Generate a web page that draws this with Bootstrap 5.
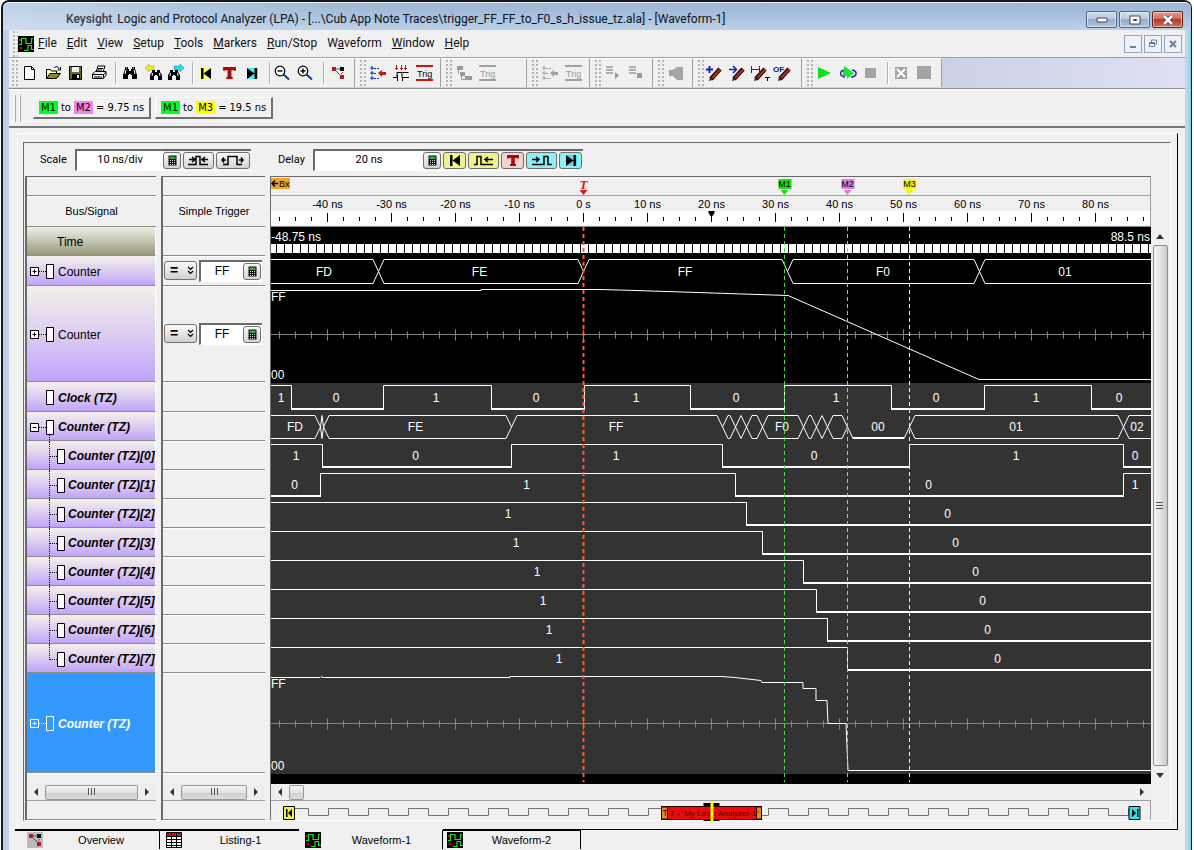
<!DOCTYPE html>
<html lang="en">
<head>
<meta charset="utf-8">
<meta name="viewport" content="width=device-width, initial-scale=1">
<title>Keysight Logic and Protocol Analyzer</title>
<link href="https://cdn.jsdelivr.net/npm/bootstrap@5.3.0/dist/css/bootstrap.min.css" rel="stylesheet">
<style>
:root{--face:#f0f0f0;--line:#a0a0a0;--dark:#6e6e6e;--ui:Roboto,"Open Sans",sans-serif;--tah:"DejaVu Sans Condensed","DejaVu Sans",sans-serif;--ari:"Liberation Sans",Arial,sans-serif}
body{background:#fff;font:12px/16px var(--ari);color:#000}
button,input,select{font:inherit;color:inherit}
svg{display:block;flex:none}
.win{margin:0 2px 0 1px;border:solid #14161c;border-width:2px 1px 0 2px;border-radius:8px 8px 0 0;background:linear-gradient(90deg,#bdd1e8 0 6px,#c3d6ea calc(100% - 6px),#b9d5ee calc(100% - 3px),#63d8ec);padding:0 6px}
.title-bar{height:28px;margin:0 -6px;padding:0 8px 0 63px;border-top:1px solid #eaf2fa;border-radius:6px 6px 0 0;background:linear-gradient(90deg,rgba(220,232,245,.55),transparent 30%),linear-gradient(#9cb6d4,#a9c1dd 50%,#bcd2ea)}
.title-text{font:12px/24px var(--ui);color:#0c1422;padding-top:4px}
.title-text b{font-weight:500;color:#3b3f4a;margin-right:5px}
.win-btn{width:31px;height:17px;border:1px solid #51647d;border-radius:2px;background:linear-gradient(#cddcec,#b7cbe0 48%,#94aeca 50%,#adc6df);box-shadow:inset 0 0 0 1px rgba(255,255,255,.5)}
.win-btn.close-btn{background:linear-gradient(#e39a8e,#d0695a 48%,#b53a26 50%,#d2705a);border-color:#5e2119}
.menu-bar{height:28px;background:var(--face);border-bottom:1px solid var(--line);padding:0 3px 0 4px}
.menu-bar a{color:#111;text-decoration:none;font:12px/27px var(--ui)}
.menu-links{gap:10px}.tight{gap:2px}
.mdi-btn{width:18px;height:18px;border:1px solid #8fa5c0;background:#eef3fa}
.grip{width:5px;height:26px;flex:none;background:radial-gradient(circle at 1px 1px,#b4b4b4 1px,transparent 1px) 0 0/4px 4px}
.tools{height:31px;background:linear-gradient(90deg,#ccd1e6 80%,#dfe1f2);border-bottom:1px solid #8c8c8c}
.tool-group{height:29px;background:var(--face);border-right:1px solid var(--line);border-top:1px solid #fff;padding:0 5px 0 5px}
.tool-group .grip{width:6px}
.tool-group.first{padding-left:3px}
.tool-group.roomy{padding-right:28px}
.tool-btn{width:23px;height:28px;border:0;background:none}
.tool-sep{width:8px;height:22px;background:linear-gradient(90deg,transparent 5px,#b0b0b0 5px 6px,#fff 6px 7px,transparent 7px)}
.readings{height:39px;background:var(--face);border-bottom:2px solid #777;border-top:1px solid #fff;padding:0 5px;box-shadow:inset 0 -4px 0 var(--face),inset 0 -5px 0 #fff}
.bar-grip{width:7px;height:27px;border:solid #a8a8a8;border-width:0 1px 0 0;background:linear-gradient(90deg,#fff 1px,#a8a8a8 1px 2px,var(--face) 2px 5px,#fff 5px)}
.reading{height:22px;font:11px/14px var(--tah);border:solid;border-color:#fff #707070 #707070 #fff;border-width:1px 2px 2px 1px;background:var(--face);padding:0 5px}
.chip{padding:0 2px;display:inline-block;line-height:13px}
.m1{background:#0f2}.m2{background:#ee82ee}.m3{background:#ff0}
.desk{background:var(--face);padding:5px 7px 0 8px}
.bevel{border:solid;border-color:#fff #000 #000 #fff;border-width:1px;padding:8px 6px 8px 5px}
.sunk{border:solid;border-color:#6a6a6a #fff #fff #6a6a6a;border-width:1px;padding:0 0 0 1px}
.scale-row{height:33px}
.scale-row label{font:11px/16px var(--ui)}
.lab-scale{width:50px;padding-left:15px}
.lab-delay{width:62px;padding-left:27px}
.field{height:22px;border:solid;border-color:#6a6a6a #fff #fff #6a6a6a;border-width:2px 0 1px 2px;background:#fff}
.field input{border:0;outline:0;background:none;text-align:center;padding:0;height:18px;font:11px/16px var(--ui)}
.field .rest{background:var(--face);height:19px;padding:0 1px 0 0}
.in-scale{width:86px}.in-delay{width:108px}.in-trig{width:42px}
.field .in-trig{font:12px/16px var(--ari)}
.cap-btn{height:17px;border:1px solid #707070;border-radius:3px;background:linear-gradient(#f8f8f8,#d4d4d4);padding:0;display:flex;align-items:center;justify-content:center}
.w18{width:18px}.w22{width:23px}.w30{width:31px}.w33{width:34px}
.yel{background:#f2f28a}.cya{background:#8ff0f4}.pnk{background:#f4d4d0}
.pane{border:solid #6a6a6a;border-width:1px 0 0 2px}
.pane-bus{width:131px;margin-right:5px}
.pane-trig{width:104px;margin-right:5px;background:var(--face)}
.pane-wave{border-width:1px 0 0 1px;min-width:0}
.cellrow{border-bottom:1px solid #8c8c8c;box-shadow:0 1px 0 #fff;height:29px}
.h19{height:19px}.h31{height:31px}.h30{height:30px}.h96{height:96px}.h100{height:100px}
.trig-cell{gap:2px;padding-left:1px}
.head{font-size:11px}
.time-cell,.bus-cell,.picked{border-right:1px solid #fff;padding-top:2px;white-space:nowrap}
.time-cell{background:linear-gradient(#efefe6,#97987a);padding-left:30px}
.bus-cell,.picked{padding-left:3px}
.bus-cell{background:linear-gradient(#f4f0ec,#dccdf0 50%,#bfa3fb)}
.bit-cell{padding-left:18px}
.bit-cell span{padding-left:3px}
.picked{background:#3399ff;color:#fff;--box:#3399ff}
.tz{font-weight:700;font-style:italic}
.gap-row{height:11px}
.hs{height:17px;background:#eee;border-bottom:1px solid var(--line)}
.hs button{width:18px;height:16px;border:0;background:none;padding:0;display:flex;align-items:center;justify-content:center}
.hs .thumb{height:15px;border:1px solid #979797;border-radius:2px;background:linear-gradient(#f4f4f4,#e2e2e2 50%,#cfcfcf 50%,#dcdcdc)}
.hs .short{width:15px}
.foot{height:19px;border-bottom:1px solid #8c8c8c}
.pane-wave .foot{border:0;border-right:1px solid var(--line)}
.trig-select{width:33px;height:19px;border:1px solid #707070;border-radius:3px;appearance:none;font:bold 14px/14px var(--ari);padding:0 0 2px 5px;background:url("data:image/svg+xml,%3Csvg xmlns='http://www.w3.org/2000/svg' width='7' height='9'%3E%3Cpath d='M1 1l2.5 2.5L6 1M1 5l2.5 2.5L6 5' fill='none' stroke='%23000' stroke-width='1.2'/%3E%3C/svg%3E") no-repeat 22px 4px,linear-gradient(#fafafa,#d0d0d0)}
.ruler{height:50px;border-bottom:1px solid #8c8c8c;border-right:1px solid var(--line)}
.ruler svg text{font-size:11px}
.vs{width:19px;padding:51px 2px 0 1px}
.vs button{height:18px;border:0;background:none;padding:0}
.vs .thumb{width:15px;height:521px;border:1px solid #8f8f8f;border-radius:2px;background:linear-gradient(90deg,#f2f2f2,#e6e6e6 45%,#c8c8c8)}
.bar-red{--bar:#c81414}.bar-grey{--bar:#a0a0a0;color:#9a9a9a}
.sheet-tabs{height:20px;margin:0 -7px 0 -8px;padding-left:6px}
.sheet-tabs a{height:20px;border-top:2px solid #000;border-right:1px solid #000;color:#000;text-decoration:none;font-size:11px;width:139px;padding-left:6px;margin-top:-1px}
.sheet-tabs a.lead-tab{width:145px;padding-left:12px}
.sheet-tabs a.on{border-color:var(--face) #000 var(--face) var(--face);width:144px}
.sheet-tabs a.end-tab{width:138px;padding-left:4px}
.sheet-tabs span{text-align:center;flex:1}
.plot text,.ruler text,.ov text{font-family:var(--ari)}
</style>
</head>
<body>
<svg width="0" height="0" class="position-absolute" aria-hidden="true">
<defs>
<symbol id="app" viewBox="0 0 16 16"><path d="M0 0h16v16H0z" fill="#000"/><path d="M1 8.500h2.500v-6H8v5h5.500v-5H15M6 14.500h4v-5h3.500v4H16" fill="none" stroke="#1ee02a" stroke-width="1.200"/><path d="M1 3h2v2H1zM2 11h2v2H2z" fill="#b01818"/></symbol>
<symbol id="calc" viewBox="0 0 9 11"><path d="M.5.5h8v10h-8z" fill="#111"/><path d="M1.500 1.500h6v2.500h-6z" fill="#2fae3c"/><path d="M2 5.500h6M2 7.500h6M2 9.500h6" stroke="#ddd" stroke-dasharray="1 1"/></symbol>
<symbol id="first" viewBox="0 0 14 13"><path d="M1 1h11v11H1z" fill="#ff6" opacity=".8"/><path d="M2 1h2.500v11H2zM12 1v11L4.500 6.500z"/></symbol>
<symbol id="last" viewBox="0 0 14 13"><path d="M2 1h11v11H2z" fill="#35e3ee" opacity=".8"/><path d="M9.500 1H12v11H9.500zM2 1v11l7.500-5.500z"/></symbol>
<symbol id="trg" viewBox="0 0 14 13"><path d="M1 1h12v3.500h-1.500L10.500 4H8.800v6H10v2H4v-2h1.200V4H3.500l-1 .5H1z" fill="#a80c0c"/></symbol>
<symbol id="bino" viewBox="0 0 16 16"><path d="M3 2h3v2h1v2h2V4h1V2h3v2l2 6v4h-5v-4H9V9H7v1H6v4H1v-4l2-6z"/><path d="M4 5l-1 4M12 5l1 4M4 3h1M11 3h1" stroke="#fff"/></symbol>
<symbol id="bino-s" viewBox="0 0 12 10"><path d="M2 0h3v2h2V0h3v2l2 3v5H8V6H7V5H5v1H4v4H0V5l2-3z"/><path d="M2.500 3L2 6M9.500 3l.5 3" stroke="#fff"/></symbol>
<symbol id="lens" viewBox="0 0 16 16"><circle cx="6" cy="6" r="4.800" fill="#fff" stroke="#000" stroke-width="1.200"/><path d="M9.500 9.500l5.500 5" stroke="#123a8c" stroke-width="2"/><path d="M3.500 6h5" stroke="#000" stroke-width="1.400"/></symbol>
<symbol id="flow" viewBox="0 0 16 16"><path d="M2 2h4v4H2zM10 10h4v4h-4z" fill="#b01828"/><path d="M10 2h4v4h-4z" fill="#111"/><path d="M6 4h4M5 5l5 5" stroke="#555"/><path d="M11 9l2-2" stroke="#a44"/></symbol>
<symbol id="list" viewBox="0 0 16 16"><path d="M1 2h2v2H1zM1 7h2v2H1zM1 12h2v2H1z" fill="none" stroke="currentColor"/><path d="M4 3.500h3M4 8.500h3M4 13.500h5M7 3.500h3" stroke="currentColor" stroke-dasharray="2 1"/></symbol>
<symbol id="trig" viewBox="0 0 17 16"><path d="M0 1h17M0 15h17" stroke="var(--bar)" stroke-width="2"/><text x="1" y="12" font-size="9" font-family="Liberation Sans" fill="currentColor">Trig</text></symbol>
<symbol id="pen" viewBox="0 0 18 17"><path d="M6 14L15 4" stroke="#200" stroke-width="4.500"/><path d="M7 13L15 4.500" stroke="#a03020" stroke-width="2.500"/><path d="M4 16l1-3 2 2z" fill="#111"/></symbol>
<symbol id="plus" viewBox="0 0 24 17"><path d="M.5 4.500h8v8h-8z" fill="var(--box,#fff)" stroke="currentColor"/><path d="M2.500 8.500h4M4.500 6.500v4" stroke="currentColor"/><path d="M9 8.500h7" stroke="currentColor" stroke-dasharray="1 1"/><path d="M16.500 1.500h7v14h-7z" fill="var(--box,#fff)" stroke="currentColor"/></symbol>
<symbol id="kid" viewBox="0 0 20 29"><path d="M4.500 0v29M5 14.500h7" stroke="#000" stroke-dasharray="1 1"/><path d="M12.500 7.500h7v14h-7z" fill="#fff" stroke="#000"/></symbol>
<symbol id="la" viewBox="0 0 6 8"><path d="M5 0v8L1 4z" fill="#333"/></symbol>
<symbol id="ra" viewBox="0 0 6 8"><path d="M1 0v8l4-4z" fill="#333"/></symbol>
<symbol id="ribs" viewBox="0 0 9 8"><path d="M1.500 0v7M4.500 0v7M7.500 0v7" stroke="#555"/></symbol>
</defs>
</svg>

<div class="win">
<header class="title-bar d-flex align-items-start">
  <div class="title-text flex-grow-1 text-nowrap"><b>Keysight</b>Logic and Protocol Analyzer (LPA) - [...\Cub App Note Traces\trigger_FF_FF_to_F0_s_h_issue_tz.ala] - [Waveform-1]</div>
  <div class="d-flex pt-2 tight">
    <button class="win-btn p-0 d-flex align-items-center justify-content-center" aria-label="Minimize"><svg width="12" height="7"><path d="M1 2h10v4H1z" fill="#fff" stroke="#445"/></svg></button>
    <button class="win-btn p-0 d-flex align-items-center justify-content-center" aria-label="Maximize"><svg width="12" height="10"><path d="M1 1h10v8H1z" fill="#fff" stroke="#445"/><path d="M4.500 4.500h3v1h-3z" fill="#9ab" stroke="#445"/></svg></button>
    <button class="win-btn close-btn p-0 d-flex align-items-center justify-content-center" aria-label="Close"><svg width="12" height="10"><path d="M2 1l8 8M10 1L2 9" stroke="#445" stroke-width="4"/><path d="M2 1l8 8M10 1L2 9" stroke="#fff" stroke-width="2.500"/></svg></button>
  </div>
</header>

<nav class="menu-bar d-flex align-items-center">
  <span class="grip"></span>
  <svg width="16" height="16" class="me-1"><use href="#app"/></svg>
  <div class="d-flex flex-grow-1 menu-links">
    <a href="#"><u>F</u>ile</a><a href="#"><u>E</u>dit</a><a href="#"><u>V</u>iew</a><a href="#"><u>S</u>etup</a><a href="#"><u>T</u>ools</a><a href="#"><u>M</u>arkers</a><a href="#"><u>R</u>un/Stop</a><a href="#">W<u>a</u>veform</a><a href="#"><u>W</u>indow</a><a href="#"><u>H</u>elp</a>
  </div>
  <div class="d-flex tight">
    <button class="mdi-btn p-0 d-flex align-items-center justify-content-center" aria-label="Minimize document"><svg width="8" height="8"><path d="M1 6h6v2H1z" fill="#6b7f98"/></svg></button>
    <button class="mdi-btn p-0 d-flex align-items-center justify-content-center" aria-label="Restore document"><svg width="10" height="9"><path d="M3.500 3V1h5v4H7M1.500 3.500h5v4h-5zM1 4.500h6" fill="none" stroke="#6b7f98"/></svg></button>
    <button class="mdi-btn p-0 d-flex align-items-center justify-content-center" aria-label="Close document"><svg width="8" height="8"><path d="M1 1l6 6M7 1L1 7" stroke="#6b7f98" stroke-width="2"/></svg></button>
  </div>
</nav>

<div class="tools d-flex">
  <div class="tool-group first d-flex align-items-center">
    <span class="grip"></span>
    <button class="tool-btn p-0 ps-1" aria-label="New"><svg width="16" height="16"><path d="M2.500 1.500h7l3 3v10h-10zM9.500 1.500v3h3" fill="#fff" stroke="#000"/></svg></button>
    <button class="tool-btn p-0 ps-1" aria-label="Open"><svg width="17" height="16"><path d="M1.500 13.500v-9h4l1 1.500h5V8" fill="#ffffb0" stroke="#000"/><path d="M1.500 13.500L5 8.500h10.500l-4 5z" fill="#8c8c20" stroke="#000"/><path d="M9 3c2-2 4-2 5 1M15.500 2v3h-3" fill="none" stroke="#000"/></svg></button>
    <button class="tool-btn p-0 ps-1" aria-label="Save"><svg width="16" height="16"><path d="M1.500 1.500h12v13h-12z" fill="#6b6b20" stroke="#000"/><path d="M4 2h7v5H4z" fill="#eee"/><path d="M4 9h8v5H4z"/><path d="M9 10h2v3H9z" fill="#eee"/></svg></button>
    <button class="tool-btn p-0 ps-1" aria-label="Print"><svg width="17" height="16"><path d="M5 7l2-6h7l-2 6" fill="#fff" stroke="#000"/><path d="M1.500 9L4 6.500h11v4l-3 3H1.500z" fill="#eee" stroke="#000"/><path d="M1.500 9.500h11v4M12.500 9.500L15 7M7 3.500h5M6 5h5M3 12h8" stroke="#000" fill="none"/><path d="M9 10.500h2v1H9z" fill="#dd0"/></svg></button>
    <span class="tool-sep"></span>
    <button class="tool-btn p-0 ps-1" aria-label="Find"><svg width="16" height="16"><use href="#bino"/></svg></button>
    <button class="tool-btn p-0 ps-1" aria-label="Find previous"><svg width="18" height="18"><path d="M0 4l4-4v2h5v4H4v2z" fill="#ee2" stroke="#a93" stroke-width=".5"/><use href="#bino-s" x="5" y="6" width="12" height="10"/></svg></button>
    <button class="tool-btn p-0 ps-1" aria-label="Find next"><svg width="18" height="18"><path d="M16 4l-4-4v2H6v4h6v2z" fill="#2de" stroke="#289" stroke-width=".5"/><use href="#bino-s" x="0" y="6" width="12" height="10"/></svg></button>
    <span class="tool-sep"></span>
    <button class="tool-btn p-0 ps-1" aria-label="Go to beginning"><svg width="14" height="13"><use href="#first"/></svg></button>
    <button class="tool-btn p-0 ps-1" aria-label="Go to trigger"><svg width="15" height="14"><use href="#trg"/></svg></button>
    <button class="tool-btn p-0 ps-1" aria-label="Go to end"><svg width="14" height="13"><use href="#last"/></svg></button>
    <span class="tool-sep"></span>
    <button class="tool-btn p-0" aria-label="Zoom out"><svg width="18" height="18"><use href="#lens" x="2" y="1" width="16" height="16"/></svg></button>
    <button class="tool-btn p-0" aria-label="Zoom in"><svg width="18" height="18"><use href="#lens" x="2" y="1" width="16" height="16"/><path d="M8 4.500v5" stroke="#000" stroke-width="1.400"/></svg></button>
    <span class="tool-sep"></span>
    <button class="tool-btn p-0" aria-label="Overview"><svg width="16" height="16" class="ms-1"><use href="#flow"/></svg></button>
  </div>
  <div class="tool-group d-flex align-items-center">
    <span class="grip"></span>
    <button class="tool-btn p-0 ps-1" aria-label="Bus setup"><svg width="17" height="16" color="#1a2ac0"><use href="#list" width="16"/><path d="M8 8l4-3v2h4v3h-4v2z" fill="#c01818"/></svg></button>
    <button class="tool-btn p-0 ps-1" aria-label="Sampling"><svg width="17" height="16"><path d="M3.500 0v5M8.500 0v5M12.500 0v5M2 3.500h3M7 3.500h3M11 3.500h3" stroke="#a01818"/><path d="M0 12.500h4V7.500h5v5h7M9.500 7.500h6M4.500 10v6M9.500 12v4" fill="none" stroke="#000"/></svg></button>
    <button class="tool-btn p-0 ps-1" aria-label="Trigger setup"><svg width="17" height="16" class="bar-red"><use href="#trig"/></svg></button>
  </div>
  <div class="tool-group roomy d-flex align-items-center">
    <span class="grip"></span>
    <button class="tool-btn p-0 ps-1" aria-label="Modules" disabled><svg width="17" height="16" fill="#9a9a9a"><path d="M1 1h6v4H1zM4 7h5v4H4zM9 11h7v4H9zM2 5h1v4H2zM5 11h1v3h3v1H5z"/></svg></button>
    <button class="tool-btn p-0 ps-1" aria-label="Module trigger" disabled><svg width="17" height="16" class="bar-grey"><use href="#trig"/></svg></button>
  </div>
  <div class="tool-group d-flex align-items-center">
    <span class="grip"></span>
    <button class="tool-btn p-0 ps-1" aria-label="Probe setup" disabled><svg width="17" height="16" color="#a0a0a0"><use href="#list" width="16"/><path d="M8 8l4-3v2h4v3h-4v2z" fill="#a0a0a0"/></svg></button>
    <button class="tool-btn p-0 ps-1" aria-label="Probe trigger" disabled><svg width="17" height="16" class="bar-grey"><use href="#trig"/></svg></button>
  </div>
  <div class="tool-group d-flex align-items-center">
    <span class="grip"></span>
    <button class="tool-btn p-0 ps-1" aria-label="Run script" disabled><svg width="16" height="16"><path d="M1 2h7M1 5h7M1 8h7" stroke="#9a9a9a" stroke-width="1.500"/><path d="M10 7v7l4-3.500z" fill="#9a9a9a"/></svg></button>
    <button class="tool-btn p-0 ps-1" aria-label="Stop script" disabled><svg width="16" height="16"><path d="M1 2h7M1 5h7M1 8h7" stroke="#9a9a9a" stroke-width="1.500"/><path d="M9 8h5v5H9z" fill="#9a9a9a"/></svg></button>
  </div>
  <div class="tool-group d-flex align-items-center">
    <span class="grip"></span>
    <button class="tool-btn p-0 ps-1" aria-label="Sound" disabled><svg width="16" height="16"><path d="M1 5h4l4-3h6v13H9l-4-4H1z" fill="#a4a4a4"/></svg></button>
  </div>
  <div class="tool-group d-flex align-items-center">
    <span class="grip"></span>
    <button class="tool-btn p-0" aria-label="New marker"><svg width="20" height="17"><use href="#pen" x="1" width="18"/><path d="M2 4.500h7M5.500 1v7" stroke="#1520c0" stroke-width="2"/></svg></button>
    <button class="tool-btn p-0" aria-label="Go to marker"><svg width="20" height="17"><use href="#pen" x="1" width="18"/><path d="M2 4.500h7M6 1l3.500 3.500L6 8" fill="none" stroke="#1520c0" stroke-width="1.500"/></svg></button>
    <button class="tool-btn p-0" aria-label="Interval marker"><svg width="21" height="17"><use href="#pen" width="18"/><path d="M1.500 1v7M9.500 1v7M2 4.500h7" stroke="#1520c0"/><path d="M15 12.500h5M17.500 12v4" stroke="#000"/></svg></button>
    <button class="tool-btn p-0" aria-label="Value marker"><svg width="20" height="17"><use href="#pen" x="1" width="18"/><text x="0" y="7" font-size="8" font-weight="bold" font-family="Liberation Sans" fill="#101080">OF</text></svg></button>
  </div>
  <div class="tool-group d-flex align-items-center">
    <span class="grip"></span>
    <button class="tool-btn p-0 ps-1" aria-label="Run"><svg width="16" height="16"><path d="M1 2v12l13-6z" fill="#0be01a"/></svg></button>
    <button class="tool-btn p-0 ps-1" aria-label="Run repetitive"><svg width="17" height="16"><path d="M5 5C-1 6-1 11 5 12M12 5c6 1 5 7-1 7" fill="none" stroke="#1c2cb0" stroke-width="1.500"/><path d="M4 1v5h-1v5h4v3l7-6z" fill="#1be42a"/></svg></button>
    <button class="tool-btn p-0 ps-1" aria-label="Stop" disabled><svg width="16" height="16"><path d="M2 3h11v10H2z" fill="#a4a4a4"/></svg></button>
    <span class="tool-sep"></span>
    <button class="tool-btn p-0 ps-1" aria-label="Cancel" disabled><svg width="16" height="16"><path d="M1 2h12v12H1z" fill="#a4a4a4"/><path d="M3 4l8 8M11 4l-8 8" stroke="#fff" stroke-width="2"/></svg></button>
    <button class="tool-btn p-0 ps-1" aria-label="Stop all" disabled><svg width="16" height="16"><path d="M0 1h14v13H0z" fill="#a4a4a4"/></svg></button>
  </div>
</div>

<div class="readings d-flex align-items-center">
  <span class="bar-grip me-2"></span>
  <div class="d-flex ms-1 menu-readings" style="gap:4px">
    <button class="reading"><span class="chip m1">M1</span> to <span class="chip m2">M2</span> = 9.75 ns</button>
    <button class="reading"><span class="chip m1">M1</span> to <span class="chip m3">M3</span> = 19.5 ns</button>
  </div>
</div>

<main class="desk">
<div class="bevel"><div class="sunk">
  <div class="scale-row d-flex align-items-center">
    <label for="scale" class="lab-scale text-nowrap">Scale</label>
    <div class="field d-flex"><input id="scale" class="in-scale" value="10 ns/div">
      <div class="rest d-flex align-items-center tight">
        <button class="cap-btn w18" aria-label="Scale keypad"><svg width="9" height="11"><use href="#calc"/></svg></button>
        <button class="cap-btn w30" aria-label="Zoom out scale"><svg width="22" height="11"><path d="M0 9.500h8V1.500h4v8h8M1 4.500h5M15 4.500h5M4 2l3 2.500L4 7M17 2l-3 2.500L17 7" fill="none" stroke="#000" stroke-width="1.500"/></svg></button>
        <button class="cap-btn w33" aria-label="Zoom in scale"><svg width="24" height="11"><path d="M2 9.500h5V1.500h9v8h5M1 5h4M18 5h4M3 2.500L1 5l2 2.500M20 2.500L22 5l-2 2.500" fill="none" stroke="#000" stroke-width="1.500"/></svg></button>
      </div></div>
    <label for="delay" class="lab-delay text-nowrap">Delay</label>
    <div class="field d-flex"><input id="delay" class="in-delay" value="20 ns">
      <div class="rest d-flex align-items-center tight">
        <button class="cap-btn w18" aria-label="Delay keypad"><svg width="9" height="11"><use href="#calc"/></svg></button>
        <button class="cap-btn yel w22" aria-label="Beginning of data"><svg width="14" height="13"><use href="#first"/></svg></button>
        <button class="cap-btn yel w30" aria-label="Previous edge"><svg width="22" height="11"><path d="M1 9.500h3V1.500h4v8h12M12 4.500h8M15 2l-3 2.500L15 7" fill="none" stroke="#000" stroke-width="1.500"/></svg></button>
        <button class="cap-btn pnk w22" aria-label="Trigger point"><svg width="14" height="13"><use href="#trg"/></svg></button>
        <button class="cap-btn cya w30" aria-label="Next edge"><svg width="22" height="11"><path d="M1 9.500h12V1.500h4v8h4M1 4.500h7M5 2l3 2.500L5 7" fill="none" stroke="#000" stroke-width="1.500"/></svg></button>
        <button class="cap-btn cya w22" aria-label="End of data"><svg width="14" height="13"><use href="#last"/></svg></button>
      </div></div>
  </div>

  <div class="d-flex">
    <section class="pane pane-bus flex-shrink-0">
      <div class="cellrow h19"></div>
      <div class="cellrow h31 head d-flex align-items-center justify-content-center">Bus/Signal</div>
      <div class="cellrow time-cell d-flex align-items-center">Time</div>
      <div class="cellrow bus-cell h30 d-flex align-items-center"><svg width="24" height="17"><use href="#plus"/></svg><span class="ps-1">Counter</span></div>
      <div class="cellrow bus-cell h96 d-flex align-items-center"><svg width="24" height="17"><use href="#plus"/></svg><span class="ps-1">Counter</span></div>
      <div class="cellrow bus-cell h30 d-flex align-items-center tz"><svg width="24" height="17"><path d="M16.500 1.500h7v14h-7z" fill="#fff" stroke="#000"/></svg><span class="ps-1">Clock (TZ)</span></div>
      <div class="cellrow bus-cell d-flex align-items-center tz"><svg width="24" height="29"><path d="M.5 10.500h8v8h-8zM16.500 7.500h7v14h-7z" fill="#fff" stroke="#000"/><path d="M2.500 14.500h4" stroke="#000"/><path d="M9 14.500h7M19.500 22v7" stroke="#000" stroke-dasharray="1 1"/></svg><span class="ps-1">Counter (TZ)</span></div>
      <div id="bits"></div>
      <div class="cellrow picked h100 d-flex align-items-center tz"><svg width="24" height="17"><use href="#plus"/></svg><span class="ps-1">Counter (TZ)</span></div>
      <div class="gap-row"></div>
      <div class="hs d-flex align-items-center"><button aria-label="Scroll left"><svg width="6" height="8"><use href="#la"/></svg></button><button class="thumb flex-grow-1" aria-label="Scroll names"><svg width="9" height="8"><use href="#ribs"/></svg></button><button aria-label="Scroll right"><svg width="6" height="8"><use href="#ra"/></svg></button></div>
      <div class="foot"></div>
    </section>

    <section class="pane pane-trig flex-shrink-0">
      <div class="cellrow h19"></div>
      <div class="cellrow h31 head d-flex align-items-center justify-content-center">Simple Trigger</div>
      <div class="cellrow"></div>
      <div class="cellrow h30 trig-cell d-flex align-items-center">
        <select class="trig-select" aria-label="Trigger operator"><option>=</option></select>
        <div class="field d-flex"><input class="in-trig" value="FF" aria-label="Trigger value"><div class="rest bg-white d-flex align-items-center"><button class="cap-btn w18" aria-label="Keypad"><svg width="9" height="11"><use href="#calc"/></svg></button></div></div>
      </div>
      <div class="cellrow h96 trig-cell d-flex align-items-center">
        <select class="trig-select" aria-label="Trigger operator 2"><option>=</option></select>
        <div class="field d-flex"><input class="in-trig" value="FF" aria-label="Trigger value 2"><div class="rest bg-white d-flex align-items-center"><button class="cap-btn w18" aria-label="Keypad 2"><svg width="9" height="11"><use href="#calc"/></svg></button></div></div>
      </div>
      <div class="cellrow h30"></div>
      <div class="cellrow"></div><div class="cellrow"></div><div class="cellrow"></div><div class="cellrow"></div><div class="cellrow"></div><div class="cellrow"></div><div class="cellrow"></div><div class="cellrow"></div><div class="cellrow"></div>
      <div class="cellrow h100"></div>
      <div class="gap-row"></div>
      <div class="hs d-flex align-items-center"><button aria-label="Scroll left"><svg width="6" height="8"><use href="#la"/></svg></button><button class="thumb flex-grow-1" aria-label="Scroll triggers"><svg width="9" height="8"><use href="#ribs"/></svg></button><button aria-label="Scroll right"><svg width="6" height="8"><use href="#ra"/></svg></button></div>
      <div class="foot"></div>
    </section>

    <section class="pane pane-wave flex-grow-1">
      <div class="ruler"><svg id="ruler" width="100%" height="49"></svg></div>
      <svg id="plot" class="plot" width="100%" height="557" role="img" aria-label="Waveform traces"></svg>
      <div class="hs d-flex align-items-center"><button aria-label="Scroll left"><svg width="6" height="8"><use href="#la"/></svg></button><button class="thumb short" aria-label="Scroll waveform"></button><span class="flex-grow-1"></span><button aria-label="Scroll right"><svg width="6" height="8"><use href="#ra"/></svg></button></div>
      <div class="foot"><svg id="ov" class="ov" width="100%" height="19" overflow="visible"></svg></div>
    </section>

    <div class="vs d-flex flex-column align-items-center flex-shrink-0">
      <button aria-label="Scroll up"><svg width="8" height="5"><path d="M0 5h8L4 0z" fill="#333"/></svg></button>
      <button class="thumb d-flex align-items-center justify-content-center" aria-label="Scroll rows"><svg width="8" height="9"><path d="M0 1.500h7M0 4.500h7M0 7.500h7" stroke="#555"/></svg></button>
      <button aria-label="Scroll down"><svg width="8" height="5"><path d="M0 0h8L4 5z" fill="#333"/></svg></button>
    </div>
  </div>
</div></div>

<nav class="sheet-tabs d-flex">
  <a href="#" class="lead-tab d-flex align-items-center"><svg width="16" height="16"><path d="M0 0h16v16H0z" fill="#bbb"/><use href="#flow"/></svg><span>Overview</span></a>
  <a href="#" class="d-flex align-items-center border-end-0"><svg width="16" height="16"><path d="M.5 .5h15v15H.5z" fill="#fff" stroke="#000"/><path d="M1 1h14v3H1z" fill="#c01818"/><path d="M1 4.500h14M1 7.500h14M1 10.500h14M1 13.500h14M5.500 1v14M10.500 1v14" stroke="#000"/></svg><span>Listing-1</span></a>
  <a href="#" class="on d-flex align-items-center" aria-current="page"><svg width="16" height="16"><use href="#app"/></svg><span>Waveform-1</span></a>
  <a href="#" class="end-tab d-flex align-items-center"><svg width="16" height="16"><use href="#app"/></svg><span>Waveform-2</span></a>
</nav>
</main>
</div>

<script src="https://cdn.jsdelivr.net/npm/bootstrap@5.3.0/dist/js/bootstrap.bundle.min.js"></script>
<script>
// Horizontal data is in plot units: 6.4 units per nanosecond, 880 units over the full span.
const SPAN = 880, ZERO = 312.5;

// Rows for the individual bits of the expanded bus.
document.getElementById('bits').innerHTML = [0,1,2,3,4,5,6,7].map(n =>
  `<div class="cellrow bus-cell bit-cell d-flex align-items-center tz"><svg width="20" height="29">${n < 7 ? '<use href="#kid"/>' : '<path d="M4.500 0v15M5 14.500h7" stroke="#000" stroke-dasharray="1 1"/><path d="M12.500 7.500h7v14h-7z" fill="#fff" stroke="#000"/>'}</svg><span>Counter (TZ)[${n}]</span></div>`).join('');

const bits = [
  {hi:158.5, lo:182, base:175, start:1, edges:[20.5,112.5,220.5,313.5,419.5,513.5,620.5,713.5,820.5], at:[10,65,165,265,365,465,565,665,765,848]},
  {start:1, edges:[51.5,240.5,451.5,638.5,852.5], at:[25,144.5,345,543,745,864]},
  {start:0, edges:[49.5,464.5,852.5], at:[23.5,255.5,657.5,864]},
  {start:1, edges:[475.5], at:[237,676.5]}, {start:1, edges:[491.5], at:[245,684.5]},
  {start:1, edges:[532.5], at:[266,704.5]}, {start:1, edges:[545.5], at:[272,711.5]},
  {start:1, edges:[556.5], at:[278,716.5]}, {start:1, edges:[576.5], at:[288,726.5]}
];
bits.slice(1).forEach((b, i) => { b.hi = 217.5 + 29*i; b.lo = 240 + 29*i; b.base = 233 + 29*i; });

const buses = [
  {hi:32.5, lo:56.5, base:49, cuts:[107.5,312.5,516.5,708.5], vals:['FD','FE','FF','F0','01'], at:[53,208.5,414,612,794]},
  {hi:188.5, lo:211.5, base:204, cuts:[49.5,52.5,240.5,451.5,464.5,475.5,491.5,532.5,545.5,556.5,576.5,638.5,852.5],
   vals:['FD','','FE','FF','','','','F0','','','','00','01','02'], at:[24,0,144.5,345,0,0,0,511,0,0,0,607,745,866]}
];
const markers = [{x:312.5,c:'#ff5a38',w:2},{x:513.5,c:'#3fe03f',w:1},{x:576.5,c:'#f090f0',w:1},{x:638.5,c:'#ffff55',w:1}];

function draw() {
  const plot = document.getElementById('plot');
  const W = plot.getBoundingClientRect().width, k = W / SPAN, X = x => +(x*k).toFixed(2);
  const txt = (x, y, s, a='middle') => `<text x="${X(x)}" y="${y}" text-anchor="${a}" fill="#fff" font-size="12">${s}</text>`;
  const line = (d, w=1, c='#fff') => `<path d="${d}" fill="none" stroke="${c}" stroke-width="${w}"/>`;
  let o = `<rect width="${W}" height="557"/><rect y="156" width="${W}" height="391" fill="#333"/>`;
  o += `<rect y="17" width="${W}" height="9" fill="#fff"/>`;
  let d = ''; for (let x = 5.5; x < SPAN; x += 8) d += `M${X(x)} 17v9`;
  o += line(d, 1, '#000') + txt(0, 14, '-48.75 ns', 'start') + txt(SPAN-1, 14, '88.5 ns', 'end');

  for (const b of buses) {
    const ends = [0, ...b.cuts, SPAN], mid = (b.hi + b.lo)/2; d = '';
    b.vals.forEach((v, i) => {
      const l = ends[i], r = ends[i+1], h = Math.min(5.5, (r-l)/2);
      const a = i ? l+h : 0, z = i < b.vals.length-1 ? r-h : SPAN;
      for (const y of [b.hi, b.lo]) {
        if (v === 'FF' && y === b.lo || v === '00' && y === b.hi) continue;
        d += i ? `M${X(l)} ${mid}L${X(a)} ${y}` : `M0 ${y}`;
        d += `H${X(z)}` + (i < b.vals.length-1 ? `L${X(r)} ${mid}` : '');
      }
      if (v === '00') o += line(`M${X(a)} ${b.lo-0.5}H${X(z)}`, 2);
      if (v) o += txt(b.at[i], b.base, v);
    });
    o += line(d);
  }
  for (const b of bits) {
    const ends = [0, ...b.edges, SPAN]; let thin = '', thick = '', v = b.start;
    for (let i = 0; i < ends.length-1; i++, v = 1-v) {
      if (v) thin += `M${X(ends[i])} ${b.hi}H${X(ends[i+1])}`; else thick += `M${X(ends[i])} ${b.lo}H${X(ends[i+1])}`;
      if (i) thin += `M${X(ends[i])} ${b.hi}V${b.lo+1}`;
      o += txt(b.at[i], b.base, v);
    }
    o += line(thin) + line(thick, 2);
  }
  for (const y of [107.5, 496.5]) {
    d = `M0 ${y}H${W}`;
    for (let x = ZERO-19*16, i = -19; x < SPAN; x += 16, i++) { const h = i % 4 ? 3 : 5; d += `M${X(x)} ${y-h}v${2*h+1}`; }
    o += line(d, 1, '#858585');
  }
  o += line('M' + [[0,63.5],[210,63.5],[210,62.5],[330,62.5],[365,63.5],[517,68.5],[708,152.5],[880,152.5]].map(p => X(p[0])+' '+p[1]).join('L'));
  o += line('M' + [[0,450.5],[49,450.5],[50,449.5],[52,450.5],[239,450.5],[239,449.5],[451,449.5],[464,450.5],[490,453.5],[491,455.5],[532,455.5],[532,461.5],[545,461.5],[545,473.5],[556,473.5],[557,496.5],[575,496.5],[577,543.5],[880,543.5]].map(p => X(p[0])+' '+p[1]).join('L'));
  o += txt(0,74,'FF','start') + txt(0,152,'00','start') + txt(0,461,'FF','start') + txt(0,543,'00','start');
  for (const m of markers) o += `<path d="M${X(m.x)} 0V555" stroke="${m.c}" stroke-width="${m.w}" stroke-dasharray="4 3"/>`;
  plot.innerHTML = o;

  // Time ruler with marker flags.
  o = `<path d="M0 18.500H${W}" stroke="#a0a0a0"/><rect y="34" width="${W}" height="14" fill="#fff"/>`; d = '';
  for (let i = -19; ; i++) {
    const x = ZERO + 16*i; if (x >= SPAN) break;
    d += i % 4 ? `M${X(x)} 40v4` : `M${X(x)} 36v9`;
    if (i % 4 === 0 && x + 30 < SPAN) o += `<text x="${X(x)}" y="31" text-anchor="middle">${i ? i*10/4+' ns' : '0 s'}</text>`;
  }
  o += line(d, 1, '#000') + `<path d="M${X(440.5)-3} 34h6v2l-2 3h-2l-2-3z"/>`;
  o += `<rect x="0" y="1" width="19" height="11" fill="#eea52c"/><path d="M1 6.500h6M4 3.500l-3 3 3 3" fill="none" stroke="#000" stroke-width="1.500"/><text x="8" y="10" style="font-size:9px">Bx</text>`;
  o += `<text x="${X(312.5)}" y="12" text-anchor="middle" fill="#d81818" style="font:italic bold 13px 'Liberation Serif'">T</text><path d="M${X(312.5)-4} 13h8l-4 5z" fill="#d81818"/>`;
  [['M1',513.5,'#1ae01a'],['M2',576.5,'#e07ae0'],['M3',638.5,'#f4f41a']].forEach(m => {
    o += `<rect x="${X(m[1])-6}" y="2" width="13" height="10" fill="${m[2]}"/><path d="M${X(m[1])-4} 13h8l-4 5z" fill="${m[2]}"/><text x="${X(m[1])}" y="10" text-anchor="middle" style="font-size:9px">${m[0]}</text>`;
  });
  document.getElementById('ruler').innerHTML = o;

  // Memory overview strip.
  const R = W - 22; d = 'M24 7.500h13.500';
  for (let x = 37.5, low = 1; x < R; x += 20, low ^= 1) d += `V${low ? 14.500 : 7.500}H${Math.min(x+20, R)}`;
  const c = X(440.5);
  o = line(d, 1, '#707070');
  o += `<path d="M12.500 5.500h11v13h-11z" fill="#f4f440" stroke="#000"/><path d="M15 8h1.500v8H15zM21 8v8l-4-4z"/>`;
  o += `<path d="M${R} 5.500h11v13h-11z" fill="#2fe3e8" stroke="#000"/><path d="M${R+8} 8h1.500v8H${R+8}zM${R+3} 8v8l4-4z"/>`;
  o += `<rect x="${c-8}" y="2" width="16" height="18"/><rect x="${c-50}" y="5.500" width="100" height="13" fill="#e80c0c" stroke="#300"/><path d="M${c-50} 6h6v12h-6zM${c+45} 6h5v12h-5z" fill="#e58a20" stroke="#300"/>`;
  o += `<text x="${c-49}" y="15" font-size="9" fill="#400">T</text><text x="${c-42}" y="15" font-size="8" fill="#500">T - "My Logic Analyzer-1"</text><rect x="${c-1}" y="1" width="3" height="19" fill="#ff0"/>`;
  document.getElementById('ov').innerHTML = o;
}
draw();
addEventListener('resize', draw);
</script>
</body>
</html>
